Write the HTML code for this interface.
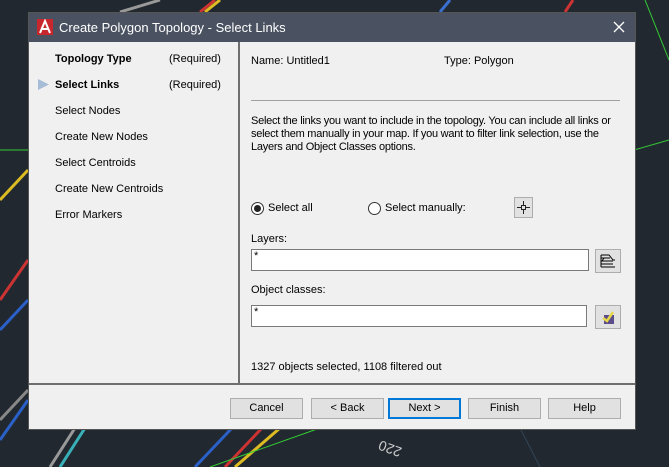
<!DOCTYPE html>
<html><head><style>
body{margin:0;width:669px;height:467px;background:#212830;position:relative;overflow:hidden;font-family:"Liberation Sans",sans-serif;font-size:11px;color:#000}
.a{position:absolute}
.dlg{left:28px;top:12px;width:606px;height:416px;background:#f0f0f0;border:1px solid #555}
.tb{left:0;top:0;width:606px;height:29px;background:#4a5261;color:#fff;font-size:13px}
.nav{white-space:nowrap}
.btn{top:385px;width:71px;height:19px;background:#e1e1e1;border:1px solid #adadad;text-align:center;line-height:19px;font-size:11px}
.inp{background:#fff;border:1px solid #7a7a7a;height:20px}
.ib{width:24px;height:22px;background:#e1e1e1;border:1px solid #adadad}
.rad{width:11px;height:11px;border:1px solid #333;border-radius:50%;background:#fff}
</style></head><body>
<svg class="a" style="left:0;top:0" width="669" height="467">
<g stroke-width="3"><line x1="160" y1="0" x2="120" y2="12" stroke="#999"/>
<line x1="200" y1="12" x2="215" y2="0" stroke="#c33"/><line x1="205" y1="12" x2="220" y2="0" stroke="#ddbb22"/>
<line x1="440" y1="12" x2="450" y2="0" stroke="#3a6fd0"/><line x1="565" y1="12" x2="573" y2="0" stroke="#c33"/>
<line x1="0" y1="440" x2="28" y2="400" stroke="#2a60c8"/><line x1="0" y1="420" x2="28" y2="390" stroke="#888"/>
<line x1="50" y1="467" x2="75" y2="428" stroke="#999"/><line x1="60" y1="467" x2="85" y2="428" stroke="#39b0b8"/>
<line x1="195" y1="467" x2="232" y2="428" stroke="#2a60c8"/><line x1="225" y1="467" x2="262" y2="428" stroke="#c33"/><line x1="235" y1="467" x2="280" y2="428" stroke="#ddbb22"/>
<line x1="0" y1="300" x2="28" y2="260" stroke="#c33"/><line x1="0" y1="330" x2="28" y2="300" stroke="#2a60c8"/><line x1="0" y1="200" x2="28" y2="170" stroke="#ddbb22"/>
</g>
<g stroke-width="1"><line x1="210" y1="467" x2="320" y2="428" stroke="#3c3"/><line x1="634" y1="150" x2="669" y2="140" stroke="#3c3"/><line x1="645" y1="0" x2="669" y2="60" stroke="#3c3"/><line x1="0" y1="150" x2="28" y2="150" stroke="#3c3"/><line x1="520" y1="428" x2="540" y2="467" stroke="#345"/></g>
<text x="385" y="435" fill="#ccc" font-size="14" transform="rotate(200 395 440)" font-family="Liberation Sans">220</text>
</svg>
<div class="a dlg">
 <div class="a tb"><svg class="a" style="left:8px;top:6px" width="16" height="16"><rect width="16" height="16" fill="#c8282d"/><path d="M3 14 L8 2 L13 14 M5.5 10 H10.5" stroke="#fff" stroke-width="2" fill="none"/></svg><span class="a" style="left:30px;top:7px">Create Polygon Topology - Select Links</span>
 <svg class="a" style="left:584px;top:8px" width="12" height="12"><path d="M1 1L11 11M11 1L1 11" stroke="#fff" stroke-width="1.3"/></svg></div>
 <div class="a" style="left:0;top:29px;width:209px;height:341px;border-right:2px solid #6f6f6f;border-bottom:2px solid #6f6f6f"></div>
 <div class="a" style="left:211px;top:29px;width:395px;height:341px;border-bottom:2px solid #6f6f6f"></div>
 <b class="a nav" style="left:26px;top:40px">Topology Type</b><span class="a" style="left:140px;top:40px">(Required)</span>
 <svg class="a" style="left:9px;top:66px" width="12" height="11"><path d="M0 0L11 5.5L0 11Z" fill="#a7bcd6"/></svg>
 <b class="a nav" style="left:26px;top:66px">Select Links</b><span class="a" style="left:140px;top:66px">(Required)</span>
 <span class="a nav" style="left:26px;top:92px">Select Nodes</span>
 <span class="a nav" style="left:26px;top:118px">Create New Nodes</span>
 <span class="a nav" style="left:26px;top:144px">Select Centroids</span>
 <span class="a nav" style="left:26px;top:170px">Create New Centroids</span>
 <span class="a nav" style="left:26px;top:196px">Error Markers</span>
 <span class="a" style="left:222px;top:42px">Name: Untitled1</span><span class="a" style="left:415px;top:42px">Type: Polygon</span>
 <div class="a" style="left:222px;top:87px;width:369px;height:1px;background:#a0a0a0"></div>
 <div class="a" style="left:222px;top:102px;width:380px;line-height:13px;letter-spacing:-0.25px">Select the links you want to include in the topology. You can include all links or select them manually in your map. If you want to filter link selection, use the Layers and Object Classes options.</div>
 <div class="a rad" style="left:222px;top:189px"><div class="a" style="left:2px;top:2px;width:7px;height:7px;border-radius:50%;background:#222"></div></div><span class="a" style="left:239px;top:189px">Select all</span>
 <div class="a rad" style="left:339px;top:189px"></div><span class="a" style="left:356px;top:189px">Select manually:</span>
 <div class="a" style="left:485px;top:184px;width:17px;height:19px;background:#e1e1e1;border:1px solid #adadad"><svg class="a" style="left:2px;top:3px" width="13" height="13"><path d="M6.5 0V4M6.5 9V13M0 6.5H4M9 6.5H13" stroke="#222"/><rect x="4.5" y="4.5" width="4" height="4" fill="none" stroke="#222"/></svg></div>
 <span class="a" style="left:222px;top:220px">Layers:</span>
 <div class="a inp" style="left:222px;top:236px;width:336px"><span class="a" style="left:2px;top:0">*</span></div>
 <div class="a ib" style="left:566px;top:236px"><svg class="a" style="left:4px;top:4px" width="16" height="14"><path d="M1 1H9L13 6H15M1 4H10M1 7H13M1 10H13M1 13H15M1 1V13M4 4L2 7" stroke="#000" fill="none"/></svg></div>
 <span class="a" style="left:222px;top:271px">Object classes:</span>
 <div class="a inp" style="left:222px;top:292px;width:334px"><span class="a" style="left:2px;top:0">*</span></div>
 <div class="a ib" style="left:566px;top:292px"><svg class="a" style="left:5px;top:5px" width="14" height="13"><rect x="3" y="4" width="10" height="9" fill="#5b4c8a"/><path d="M2 7L6 10L12 1" stroke="#e8d84a" stroke-width="2.5" fill="none"/></svg></div>
 <span class="a" style="left:222px;top:348px">1327 objects selected, 1108 filtered out</span>
 <div class="a btn" style="left:201px">Cancel</div>
 <div class="a btn" style="left:282px">&lt; Back</div>
 <div class="a btn" style="left:359px;width:69px;height:17px;line-height:17px;border:2px solid #0078d7">Next &gt;</div>
 <div class="a btn" style="left:439px">Finish</div>
 <div class="a btn" style="left:519px">Help</div>
</div>
</body></html>
